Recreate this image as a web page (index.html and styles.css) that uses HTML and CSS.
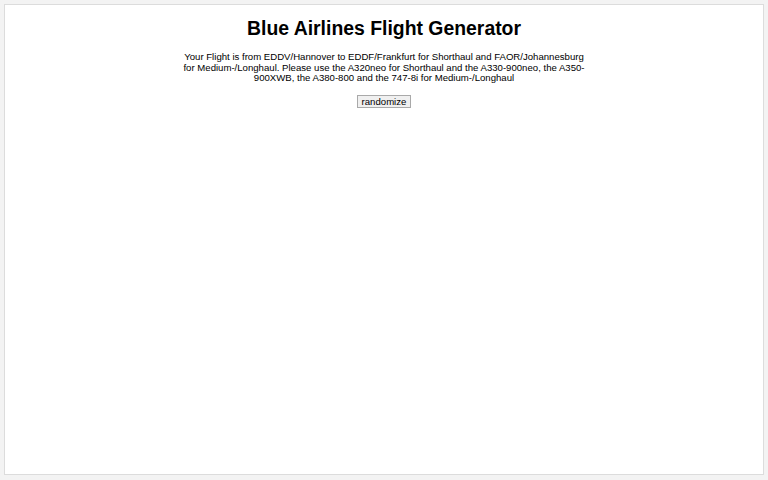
FILE: index.html
```html
<!DOCTYPE html>
<html>
<head>
<meta charset="utf-8" />
<title>Blue Airlines Flight Generator</title>
<link rel="stylesheet" href="styles.css">
</head>
<body>
<div class="page">
    <h1 class="title">Blue Airlines Flight Generator</h1>
    <p class="flight" id="flight">Your Flight is from EDDV/Hannover to EDDF/Frankfurt for Shorthaul and FAOR/Johannesburg for Medium-/Longhaul. Please use the A320neo for Shorthaul and the A330-900neo, the A350-900XWB, the A380-800 and the 747-8i for Medium-/Longhaul</p>
    <button class="btn" id="randomize">randomize</button>
</div>
</body>
</html>
```
FILE: styles.css
```css
*{ margin:0; padding:0; box-sizing:border-box;}
html, body{ height:100%;}
body{ background:#f3f3f3; padding:4px 4px 5px 4px; font-family:"Liberation Sans", Arial, sans-serif; color:#000;}
.page{ height:100%; background:#fff; border:1px solid #dcdcdc; display:flex; flex-direction:column; align-items:center; padding-top:11px;}
.title{ font-size:19.4px; font-weight:bold; line-height:24px;}
.flight{ width:404px; margin-top:12px; font-size:9.6px; line-height:10.7px; text-align:center;}
.btn{ margin-top:11px; font-family:"Liberation Sans", Arial, sans-serif; font-size:9.6px; line-height:11px; padding:0 4px; background:#f0f0f0; border:1px solid #a9a9a9; color:#000;}
```
